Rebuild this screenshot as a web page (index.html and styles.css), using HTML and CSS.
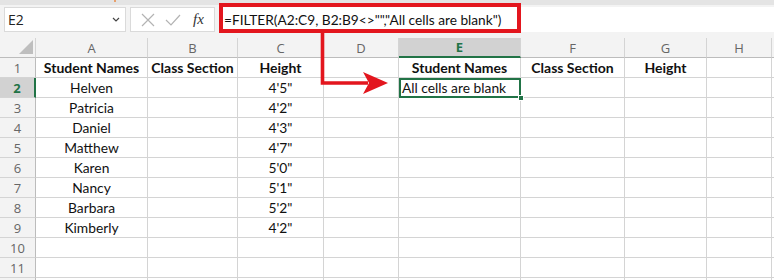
FILE: index.html
```html
<!DOCTYPE html>
<html>
<head>
<meta charset="utf-8">
<link rel="stylesheet" href="styles.css">
</head>
<body>
<div class="app">
  <div class="topstrip"><span class="tick"></span></div>
  <div class="toolbar">
    <div class="namebox"><span>E2</span><svg class="chev" width="8" height="5" viewBox="0 0 8 5"><path d="M1 1 L4 4 L7 1" fill="none" stroke="#444" stroke-width="1.2"/></svg></div>
    <div class="fbuttons">
      <svg width="14" height="14" viewBox="0 0 14 14"><path d="M1 1 L13 13 M13 1 L1 13" stroke="#b3b3b3" stroke-width="1.2"/></svg>
      <svg width="16" height="14" viewBox="0 0 16 14"><path d="M1 7 L6 12 L15 2" fill="none" stroke="#b3b3b3" stroke-width="1.2"/></svg>
      <span class="fx">fx</span>
    </div>
    <div class="formula">=FILTER(A2:C9, B2:B9&lt;&gt;"","All cells are blank")</div>
  </div>
  <div class="sheet">
    <div class="corner"><span class="tri"></span></div>
    <div class="ch">A</div><div class="ch">B</div><div class="ch">C</div><div class="ch">D</div><div class="ch sel">E</div><div class="ch">F</div><div class="ch">G</div><div class="ch">H</div><div class="ch end"></div>

    <div class="rh">1</div><div class="c b ctr">Student Names</div><div class="c b ctr">Class Section</div><div class="c b ctr">Height</div><div class="c"></div><div class="c b ctr">Student Names</div><div class="c b ctr">Class Section</div><div class="c b ctr">Height</div><div class="c"></div><div class="c end"></div>

    <div class="rh sel">2</div><div class="c ctr">Helven</div><div class="c"></div><div class="c ctr">4'5"</div><div class="c"></div><div class="c active">All cells are blank<span class="handle"></span></div><div class="c"></div><div class="c"></div><div class="c"></div><div class="c end"></div>

    <div class="rh">3</div><div class="c ctr">Patricia</div><div class="c"></div><div class="c ctr">4'2"</div><div class="c"></div><div class="c"></div><div class="c"></div><div class="c"></div><div class="c"></div><div class="c end"></div>

    <div class="rh">4</div><div class="c ctr">Daniel</div><div class="c"></div><div class="c ctr">4'3"</div><div class="c"></div><div class="c"></div><div class="c"></div><div class="c"></div><div class="c"></div><div class="c end"></div>

    <div class="rh">5</div><div class="c ctr">Matthew</div><div class="c"></div><div class="c ctr">4'7"</div><div class="c"></div><div class="c"></div><div class="c"></div><div class="c"></div><div class="c"></div><div class="c end"></div>

    <div class="rh">6</div><div class="c ctr">Karen</div><div class="c"></div><div class="c ctr">5'0"</div><div class="c"></div><div class="c"></div><div class="c"></div><div class="c"></div><div class="c"></div><div class="c end"></div>

    <div class="rh">7</div><div class="c ctr">Nancy</div><div class="c"></div><div class="c ctr">5'1"</div><div class="c"></div><div class="c"></div><div class="c"></div><div class="c"></div><div class="c"></div><div class="c end"></div>

    <div class="rh">8</div><div class="c ctr">Barbara</div><div class="c"></div><div class="c ctr">5'2"</div><div class="c"></div><div class="c"></div><div class="c"></div><div class="c"></div><div class="c"></div><div class="c end"></div>

    <div class="rh">9</div><div class="c ctr">Kimberly</div><div class="c"></div><div class="c ctr">4'2"</div><div class="c"></div><div class="c"></div><div class="c"></div><div class="c"></div><div class="c"></div><div class="c end"></div>

    <div class="rh">10</div><div class="c"></div><div class="c"></div><div class="c"></div><div class="c"></div><div class="c"></div><div class="c"></div><div class="c"></div><div class="c"></div><div class="c end"></div>

    <div class="rh">11</div><div class="c"></div><div class="c"></div><div class="c"></div><div class="c"></div><div class="c"></div><div class="c"></div><div class="c"></div><div class="c"></div><div class="c end"></div>

    <div class="rh"></div><div class="c"></div><div class="c"></div><div class="c"></div><div class="c"></div><div class="c"></div><div class="c"></div><div class="c"></div><div class="c"></div><div class="c end"></div>
  </div>
  <div class="redbox"></div>
  <svg class="arrow" width="774" height="280" viewBox="0 0 774 280">
    <polyline points="322.5,32 322.5,83 368,83" fill="none" stroke="#e3161e" stroke-width="3.6"/>
    <polygon points="363,72 388,83 363,94 369,83" fill="#e3161e"/>
  </svg>
</div>
</body>
</html>
```

FILE: styles.css
```css
* { box-sizing: border-box; }
html, body { margin: 0; padding: 0; background: #ffffff; }
body { width: 774px; height: 280px; overflow: hidden; font-family: "Lato", "Open Sans", sans-serif; }
.app { position: relative; width: 774px; height: 280px; overflow: hidden; }

.topstrip { height: 5px; background: #e4e4e4; position: relative; }
.tick { position: absolute; left: 114px; top: 0; width: 2px; height: 2px; background: #e8a06b; }

.toolbar {
  height: 33px;
  background: #f3f3f3;
  display: flex;
  align-items: flex-start;
  padding: 2px 0 0 4px;
}
.namebox {
  width: 122px; height: 25px;
  background: #fff;
  border: 1px solid #dadada;
  display: flex; align-items: center; justify-content: space-between;
  padding: 0 5px 0 3px;
  font-family: "Open Sans", sans-serif; font-size: 14px; color: #222;
}
.fbuttons {
  margin-left: 4px;
  width: 85px; height: 25px;
  background: #fff;
  border: 1px solid #dadada;
  display: flex; align-items: center;
  gap: 10px;
  padding-left: 10px;
}
.fx { font-family: "Liberation Serif", serif; font-style: italic; font-size: 15px; color: #333; margin-left: 2px; }
.formula {
  margin-left: 4px;
  flex: 1; height: 25px;
  background: #fff;
  font-family: "Lato", sans-serif; font-size: 13.7px; color: #111;
  padding: 4px 0 0 5px;
  white-space: nowrap;
}

.sheet {
  display: grid;
  grid-template-columns: 36px 112px 90px 86px 75px 122px 104px 82px 65px 2px;
  grid-auto-rows: 20px;
  background: #fff;
}
.corner { background: #f3f3f3; border-right: 1px solid #d4d4d4; border-bottom: 1px solid #bcbcbc; position: relative; }
.tri { position: absolute; right: 2px; bottom: 3px; width: 0; height: 0; border-left: 14px solid transparent; border-bottom: 14px solid #bebebe; }
.ch {
  background: #f3f3f3;
  border-right: 1px solid #d4d4d4;
  border-bottom: 1px solid #bcbcbc;
  display: flex; align-items: center; justify-content: center;
  font-family: "Open Sans", sans-serif; font-size: 13px; color: #666;
}
.ch.sel { background: #d2d2d2; color: #217346; font-weight: 700; border-bottom: 2px solid #217346; }
.ch.end, .c.end { border-right: none; background: #fff; }
.ch.end { background: #f3f3f3; }
.rh {
  background: #f3f3f3;
  border-right: 1px solid #bcbcbc;
  border-bottom: 1px solid #d4d4d4;
  display: flex; align-items: center; justify-content: center;
  font-family: "Open Sans", sans-serif; font-size: 13px; color: #666;
}
.rh.sel { background: #d2d2d2; color: #217346; font-weight: 700; border-right: 2px solid #217346; }
.c {
  border-right: 1px solid #d4d4d4;
  border-bottom: 1px solid #d4d4d4;
  font-size: 13.8px; color: #111;
  display: flex; align-items: center;
  padding: 0 3px;
  white-space: nowrap;
  position: relative;
}
.c.ctr { justify-content: center; }
.c.b { font-weight: 700; font-size: 14px; }
.c.active { outline: 2px solid #217346; outline-offset: -2px; padding-left: 3px; }
.handle { position: absolute; right: -4px; bottom: -4px; width: 6px; height: 6px; background: #217346; border: 1px solid #fff; z-index: 2; }

.redbox {
  position: absolute; left: 219px; top: 3px; width: 302px; height: 30px;
  border: 4px solid #e3161e;
}
.arrow { position: absolute; left: 0; top: 0; pointer-events: none; }
```
